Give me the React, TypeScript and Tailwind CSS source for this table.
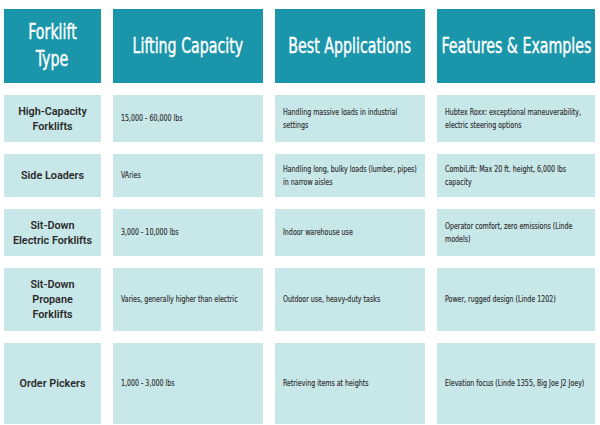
const rows = [
  {
    type: ["High-Capacity", "Forklifts"],
    capacity: "15,000 - 60,000 lbs",
    applications: "Handling massive loads in industrial settings",
    features: "Hubtex Roxx: exceptional maneuverability, electric steering options",
    height: "h-[47px]",
  },
  {
    type: ["Side Loaders"],
    capacity: "VAries",
    applications: "Handling long, bulky loads (lumber, pipes) in narrow aisles",
    features: "CombiLift: Max 20 ft. height, 6,000 lbs capacity",
    height: "h-[43px]",
  },
  {
    type: ["Sit-Down", "Electric Forklifts"],
    capacity: "3,000 - 10,000 lbs",
    applications: "Indoor warehouse use",
    features: "Operator comfort, zero emissions (Linde models)",
    height: "h-[47px]",
  },
  {
    type: ["Sit-Down", "Propane", "Forklifts"],
    capacity: "Varies, generally higher than electric",
    applications: "Outdoor use, heavy-duty tasks",
    features: "Power, rugged design (Linde 1202)",
    height: "h-[63px]",
  },
  {
    type: ["Order Pickers"],
    capacity: "1,000 - 3,000 lbs",
    applications: "Retrieving items at heights",
    features: "Elevation focus (Linde 1355, Big Joe J2 Joey)",
    height: "h-[81px]",
  },
];

const headers = [["Forklift", "Type"], ["Lifting Capacity"], ["Best Applications"], ["Features & Examples"]];

// condensed face, squeezed a bit more to get the poster look
const narrow = "font-['DejaVu_Sans',sans-serif] font-stretch-condensed";

function TextCell({ height, children }: { height: string; children: string }) {
  return (
    <div className={`flex ${height} items-center overflow-hidden bg-[#c8e7e9] pl-2 pr-1`}>
      <div
        className={`w-[128%] shrink-0 origin-left scale-x-[0.78] text-[9px] leading-[13px] text-[#2e2e2e] [-webkit-text-stroke:0.15px_#2e2e2e] ${narrow}`}
      >
        {children}
      </div>
    </div>
  );
}

export default function App() {
  return (
    <div className="h-[425px] w-[600px] bg-white pl-[4px] pt-[9px]">
      <div className="grid grid-cols-[97px_150px_150px_158px] gap-3">
        {headers.map((h, i) => (
          <div
            key={i}
            className={`flex h-[74px] flex-col items-center justify-center bg-[#1a95a9] text-center text-[20.5px] leading-[27px] text-white [-webkit-text-stroke:0.4px_white] ${narrow}`}
          >
            {h.map((line) => (
              <span key={line} className="scale-x-[0.77] whitespace-nowrap">
                {line}
              </span>
            ))}
          </div>
        ))}

        {rows.map((r) => (
          <>
            <div
              key={r.type.join(" ") + "-type"}
              className={`flex ${r.height} flex-col items-center justify-center bg-[#c8e7e9] text-center font-['Roboto',sans-serif] text-[10.8px] font-semibold leading-[15px] text-[#2b2b2b]`}
            >
              {r.type.map((line) => (
                <span key={line}>{line}</span>
              ))}
            </div>
            <TextCell height={r.height}>{r.capacity}</TextCell>
            <TextCell height={r.height}>{r.applications}</TextCell>
            <TextCell height={r.height}>{r.features}</TextCell>
          </>
        ))}
      </div>
    </div>
  );
}
